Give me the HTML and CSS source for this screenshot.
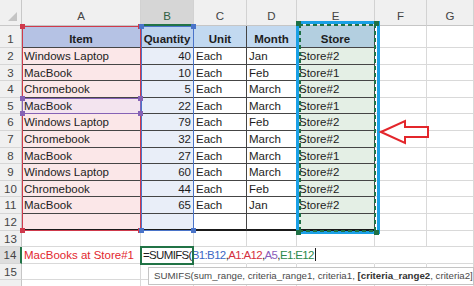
FILE: index.html
```html
<!DOCTYPE html>
<html>
<head>
<meta charset="utf-8">
<link rel="stylesheet" href="styles.css">
</head>
<body>
<div class="sheet">
  <div class="grid">
    <div class="corner"><span class="tri"></span></div>
    <div class="ch">A</div><div class="ch sel">B</div><div class="ch">C</div><div class="ch">D</div><div class="ch">E</div><div class="ch">F</div><div class="ch">G</div>

    <div class="rh r1">1</div>
    <div class="c t hd a1">Item</div><div class="c t hd b1">Quantity</div><div class="c t hd cd1">Unit</div><div class="c t hd cd1">Month</div><div class="c t hd e1">Store</div><div class="c"></div><div class="c"></div>

    <div class="rh">2</div>
    <div class="c t a">Windows Laptop</div><div class="c t b num">40</div><div class="c t">Each</div><div class="c t">Jan</div><div class="c t e">Store#2</div><div class="c"></div><div class="c"></div>
    <div class="rh">3</div>
    <div class="c t a">MacBook</div><div class="c t b num">10</div><div class="c t">Each</div><div class="c t">Feb</div><div class="c t e">Store#1</div><div class="c"></div><div class="c"></div>
    <div class="rh">4</div>
    <div class="c t a">Chromebook</div><div class="c t b num">5</div><div class="c t">Each</div><div class="c t">March</div><div class="c t e">Store#2</div><div class="c"></div><div class="c"></div>
    <div class="rh">5</div>
    <div class="c t a a5">MacBook</div><div class="c t b num">22</div><div class="c t">Each</div><div class="c t">March</div><div class="c t e">Store#1</div><div class="c"></div><div class="c"></div>
    <div class="rh">6</div>
    <div class="c t a">Windows Laptop</div><div class="c t b num">79</div><div class="c t">Each</div><div class="c t">Feb</div><div class="c t e">Store#2</div><div class="c"></div><div class="c"></div>
    <div class="rh">7</div>
    <div class="c t a">Chromebook</div><div class="c t b num">32</div><div class="c t">Each</div><div class="c t">March</div><div class="c t e">Store#2</div><div class="c"></div><div class="c"></div>
    <div class="rh">8</div>
    <div class="c t a">MacBook</div><div class="c t b num">27</div><div class="c t">Each</div><div class="c t">March</div><div class="c t e">Store#1</div><div class="c"></div><div class="c"></div>
    <div class="rh">9</div>
    <div class="c t a">Windows Laptop</div><div class="c t b num">60</div><div class="c t">Each</div><div class="c t">March</div><div class="c t e">Store#2</div><div class="c"></div><div class="c"></div>
    <div class="rh">10</div>
    <div class="c t a">Chromebook</div><div class="c t b num">44</div><div class="c t">Each</div><div class="c t">Feb</div><div class="c t e">Store#2</div><div class="c"></div><div class="c"></div>
    <div class="rh">11</div>
    <div class="c t a">MacBook</div><div class="c t b num">65</div><div class="c t">Each</div><div class="c t">Jan</div><div class="c t e">Store#2</div><div class="c"></div><div class="c"></div>
    <div class="rh">12</div>
    <div class="c t a bot"></div><div class="c t b bot"></div><div class="c t bot"></div><div class="c t bot"></div><div class="c t e bot"></div><div class="c"></div><div class="c"></div>

    <div class="rh">13</div>
    <div class="c"></div><div class="c"></div><div class="c"></div><div class="c"></div><div class="c"></div><div class="c"></div><div class="c"></div>
    <div class="rh rsel">14</div>
    <div class="c red">MacBooks at Store#1</div><div class="c fx">=SUMIFS(<span class="fb">B1:B12</span>,<span class="fa">A1:A12</span>,<span class="fp">A5</span>,<span class="fe">E1:E12</span><span class="caret"></span></div><div class="c nr"></div><div class="c nr"></div><div class="c nr"></div><div class="c nr"></div><div class="c"></div>
    <div class="rh">15</div>
    <div class="c"></div><div class="c"></div><div class="c"></div><div class="c"></div><div class="c"></div><div class="c"></div><div class="c"></div>
    <div class="rh"></div>
    <div class="c"></div><div class="c"></div><div class="c"></div><div class="c"></div><div class="c"></div><div class="c"></div><div class="c"></div>
  </div>

  <div class="ov">
    <div class="rng rA"><i class="h tl"></i><i class="h tr"></i><i class="h bl"></i><i class="h br"></i></div>
    <div class="rng rB"><i class="h tl"></i><i class="h tr"></i><i class="h bl"></i><i class="h br"></i></div>
    <div class="rng rA5"><i class="h tl"></i><i class="h tr"></i><i class="h bl"></i><i class="h br"></i></div>
    <div class="rng ants"><i class="h tl"></i><i class="h tr"></i><i class="h bl"></i><i class="h br"></i></div>
    <div class="cyan"></div>
    <div class="selbox"></div>
    <div class="tip">SUMIFS(sum_range, criteria_range1, criteria1, <b>[criteria_range2</b>, criteria2], ...)</div>
  </div>

  <svg class="arrow" width="52" height="28" viewBox="0 0 52 28">
    <polygon points="2,14 26,3 26,9 49,9 49,19 26,19 26,25" fill="#ffffff" stroke="#e3262b" stroke-width="2" stroke-linejoin="miter"/>
  </svg>
</div>
</body>
</html>
```

FILE: styles.css
```css
html, body {
  margin: 0;
  padding: 0;
  background: #ffffff;
}

.sheet {
  position: relative;
  width: 474px;
  height: 286px;
  overflow: hidden;
  font-family: "Liberation Sans", Arial, sans-serif;
  font-size: 11.5px;
  color: #1d1d1d;
  background: #ffffff;
}

.grid,
.ov {
  display: grid;
  grid-template-columns: 22px 119px 53px 53px 50px 78px 52px 47px;
  grid-template-rows: 26px 22px repeat(15, 16.6px);
}

.grid > div {
  box-sizing: border-box;
  min-width: 0;
  white-space: nowrap;
}

/* top-left corner */
.corner {
  background: #f0f0f0;
  border-right: 1px solid #c8c8c8;
  border-bottom: 1px solid #c8c8c8;
  display: flex;
  justify-content: flex-end;
  align-items: flex-end;
  padding: 0 4px 4px 0;
}
.tri {
  width: 0;
  height: 0;
  border-left: 9px solid transparent;
  border-bottom: 9px solid #c4c4c4;
}

/* column headers */
.ch {
  background: #f0f0f0;
  border-right: 1px solid #d2d2d2;
  border-bottom: 1px solid #c6c6c6;
  text-align: center;
  color: #444444;
  padding-top: 8px;
  line-height: 16px;
}
.ch.sel {
  background: #d6d6d6;
  color: #2f5f43;
  border-bottom: 2px solid #217346;
}

/* row headers */
.rh {
  background: #f0f0f0;
  border-right: 1px solid #c6c6c6;
  border-bottom: 1px solid #d6d6d6;
  text-align: center;
  color: #444444;
  padding-top: 1px;
  line-height: 15px;
}
.rh.r1 { padding-top: 6px; }
.rh.rsel {
  background: #dedede;
  border-right: 2px solid #217346;
}

/* cells */
.c {
  border-right: 1px solid #d9d9d9;
  border-bottom: 1px solid #d9d9d9;
  padding: 1px 2px 0;
  line-height: 15px;
}
.c.t {
  border-right-color: #454545;
  border-bottom-color: #454545;
}
.c.hd {
  font-weight: bold;
  text-align: center;
  padding-top: 6px;
}
.c.bot { border-bottom: 2px solid #1a1a1a; }
.c.nr { border-right-color: transparent; }
.num { text-align: right; }

.a1 { background: #b5c2e4; }
.b1 { background: #bdd3ee; }
.cd1 { background: #c2d9f0; }
.e1 { background: #b3cfe0; }
.a { background: #fbe7e8; }
.a5 { background: #f3e4ef; }
.b { background: #e9eef8; }
.e { background: #e4efe5; }

.red { color: #e2272e; }
.fx { color: #1d1d1d; letter-spacing: -0.65px; }
.fb { color: #3b67c4; }
.fa { color: #d4303f; }
.fp { color: #8a5cba; }
.fe { color: #2c8a4c; }
.caret {
  display: inline-block;
  width: 1px;
  height: 13px;
  margin-left: 1px;
  vertical-align: -2px;
  background: #1d1d1d;
}

/* overlay layer (range highlights, selection, tooltip) */
.ov {
  position: absolute;
  left: 0;
  top: 0;
  right: 0;
  bottom: 0;
  pointer-events: none;
}

.rng {
  position: relative;
  box-sizing: border-box;
}
.h {
  position: absolute;
  width: 5px;
  height: 5px;
  background: currentColor;
}
.h.tl { left: -3px; top: -3px; }
.h.tr { right: -3px; top: -3px; }
.h.bl { left: -3px; bottom: -3px; }
.h.br { right: -3px; bottom: -3px; }

.rA {
  grid-column: 2;
  grid-row: 2 / 14;
  border: 1px solid #cf3a4c;
  color: #cf3a4c;
}
.rB {
  grid-column: 3;
  grid-row: 2 / 14;
  border: 1px solid #4a74c9;
  color: #4a74c9;
}
.rA5 {
  grid-column: 2;
  grid-row: 6;
  border: 1px solid #8562b5;
  color: #8562b5;
}
.ants {
  grid-column: 6;
  grid-row: 2 / 14;
  margin: -2px -1px -1px 2px;
  color: #1e7145;
  background:
    repeating-linear-gradient(90deg, #1e7145 0 4px, transparent 4px 7px) left top / 100% 2px no-repeat,
    repeating-linear-gradient(90deg, #1e7145 0 4px, transparent 4px 7px) left bottom / 100% 2px no-repeat,
    repeating-linear-gradient(180deg, #1e7145 0 4px, transparent 4px 7px) left top / 2px 100% no-repeat,
    repeating-linear-gradient(180deg, #1e7145 0 4px, transparent 4px 7px) right top / 2px 100% no-repeat;
}
.cyan {
  grid-column: 6;
  grid-row: 2 / 14;
  box-sizing: border-box;
  margin: -5px -5px -3px -1px;
  border: 3px solid #1ba0e6;
}
.selbox {
  grid-column: 3;
  grid-row: 15;
  box-sizing: border-box;
  margin: -1px 0 -1px -1px;
  border: 2px solid #217346;
}
.tip {
  grid-column: 3 / 9;
  grid-row: 16 / 18;
  align-self: start;
  box-sizing: border-box;
  height: 18px;
  margin: 3px 0 0 7px;
  padding: 0 5px;
  background: #ffffff;
  border: 1px solid #c4c4c4;
  color: #4a4a4a;
  font-size: 9.7px;
  line-height: 16px;
  white-space: nowrap;
  overflow: hidden;
}
.tip b { color: #333333; }

.arrow {
  position: absolute;
  left: 379px;
  top: 118px;
}
```
